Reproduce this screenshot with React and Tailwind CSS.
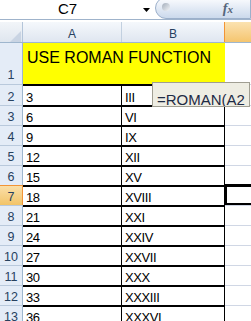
import React from "react";

const rows = [
  [2, 3, "III", 21],
  [3, 6, "VI", 20],
  [4, 9, "IX", 20],
  [5, 12, "XII", 20],
  [6, 15, "XV", 20],
  [7, 18, "XVIII", 20],
  [8, 21, "XXI", 20],
  [9, 24, "XXIV", 20],
  [10, 27, "XXVII", 20],
  [11, 30, "XXX", 20],
  [12, 33, "XXXIII", 20],
  [13, 36, "XXXVI", 20],
];

function DataRow({ n, a, b, h }) {
  const active = n === 7;
  return (
    <div className="flex" style={{ height: h }}>
      <div
        className={
          active
            ? "w-[23px] shrink-0 border-t border-r border-[#f29436] bg-linear-to-b from-[#fadfa8] to-[#f2c468] flex items-end justify-center text-[12.5px] leading-[15px] text-[#27415f]"
            : "w-[23px] shrink-0 border-t border-r border-t-[#b9c9dc] border-r-[#9eb6ce] bg-[#e4ecf7] flex items-end justify-center text-[12.5px] leading-[15px] text-[#27415f]"
        }
      >
        {n}
      </div>
      <div className="w-[99px] shrink-0 border-t-2 border-r border-black pl-[3px] flex items-end text-[13px] leading-[15px] tracking-[-0.4px]">
        {a}
      </div>
      <div className="w-[103px] shrink-0 border-t-2 border-r border-black pl-[3px] flex items-end text-[13px] leading-[15px] tracking-[-0.4px]">
        {b}
      </div>
      <div className="relative flex-1 border-t border-[#d0d7e5]">
        {active && (
          <div className="absolute -top-[2px] left-0 right-0 h-[22px] border-y-[3px] border-l-2 border-black" />
        )}
      </div>
    </div>
  );
}

export default function App() {
  return (
    <div className="relative w-[251px] h-[321px] overflow-hidden bg-white font-['Liberation_Sans',sans-serif] text-black">
      {/* formula bar */}
      <div className="flex h-[20px] border-b border-[#9fb3cb]">
        <div className="w-[135px] shrink-0 flex justify-center text-[15px] leading-[18px]">C7</div>
        <svg className="ml-[8px] mt-[8px] shrink-0" width="7" height="4" viewBox="0 0 7 4">
          <path d="M0 0H7L3.5 4Z" fill="#000" />
        </svg>
        <div className="ml-[5px] flex-1 -mt-[3px] h-[22px] rounded-l-full border border-[#9cb0cb] bg-linear-to-b from-[#fbfcfe] to-[#cbd9ec] flex items-start">
          <div className="ml-[6px] mt-[5px] w-[8px] h-[8px] rounded-full bg-linear-to-br from-[#a3adba] to-[#f4f6f9]" />
          <div className="ml-auto mr-[17px] mt-[4px] font-['Liberation_Serif',serif] italic font-bold text-[14px] leading-[14px] text-[#55657a]">
            f<span className="text-[11px]">x</span>
          </div>
        </div>
      </div>

      {/* column headers */}
      <div className="mt-[2px] flex h-[21px] border-b border-[#9eb6ce] text-[12px] leading-[14px] text-[#27415f]">
        <div className="w-[23px] shrink-0 border-r border-[#b4c5d9] bg-linear-to-b from-[#f2f5f9] to-[#dfe6ef] flex items-end justify-end pr-[1px]">
          <svg width="11" height="11" viewBox="0 0 11 11">
            <path d="M11 0V11H0Z" fill="#c9d4e3" />
          </svg>
        </div>
        <div className="w-[99px] shrink-0 border-r border-[#c2d0e0] bg-linear-to-b from-[#f5f8fc] to-[#dfe6f0] flex items-end justify-center pb-[1px]">
          A
        </div>
        <div className="w-[102px] shrink-0 bg-linear-to-b from-[#f5f8fc] to-[#dfe6f0] flex items-end justify-center pb-[1px]">
          B
        </div>
        <div className="flex-1 border-l border-[#f29436] bg-linear-to-b from-[#fbe2b0] to-[#f5c56e]" />
      </div>

      {/* row 1 */}
      <div className="flex h-[41px]">
        <div className="w-[23px] shrink-0 border-r border-[#9eb6ce] bg-[#e4ecf7] flex items-end justify-center pb-[2px] text-[12.5px] leading-[14px] text-[#27415f]">
          1
        </div>
        <div className="w-[202px] shrink-0 bg-[#ffff00] pl-[4px] pt-[5px] text-[16px] leading-[19px] whitespace-nowrap">
          USE ROMAN FUNCTION
        </div>
        <div className="flex-1" />
      </div>

      {rows.map(([n, a, b, h]) => (
        <DataRow key={n} n={n} a={a} b={b} h={h} />
      ))}

      {/* formula tooltip */}
      <div className="absolute left-[152px] top-[82px] w-[98px] h-[25px] overflow-hidden border border-[#a09e92] bg-[#eeede3] pl-[4px] pt-[8px] text-[15px] leading-[17px] text-[#1e2b45] whitespace-nowrap">
        =ROMAN(A2
      </div>
    </div>
  );
}
